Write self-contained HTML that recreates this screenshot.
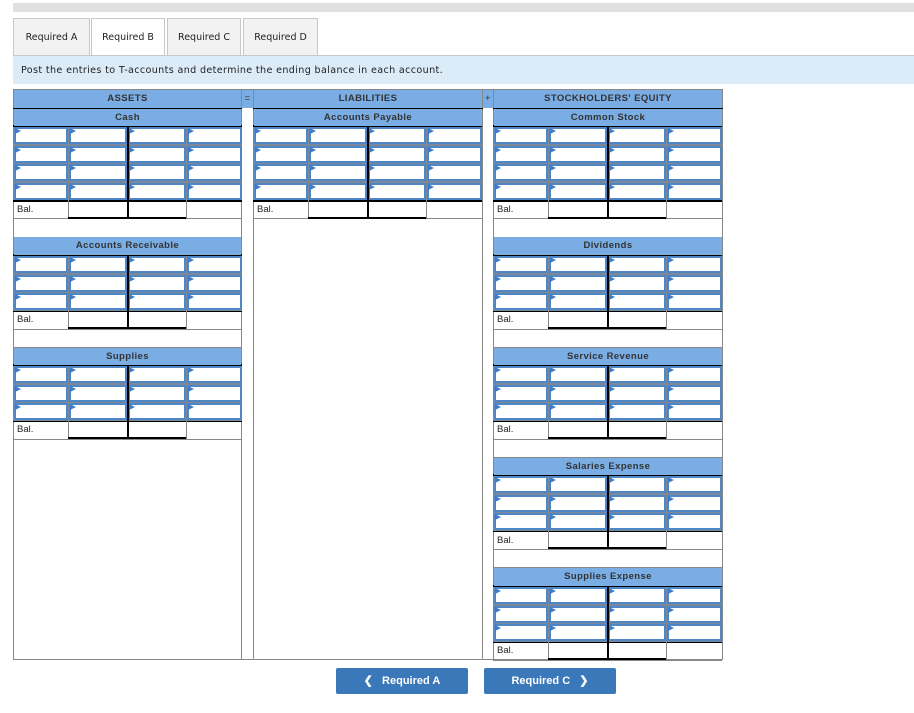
<!DOCTYPE html>
<html><head><meta charset="utf-8"><style>
body{margin:0;width:914px;height:713px;background:#fff;font-family:"Liberation Sans",Arial,sans-serif;position:relative;overflow:hidden}
.a{position:absolute;box-sizing:border-box}
.tab{position:absolute;top:18px;height:38px;border:1px solid #c8c8c8;background:#f2f2f2;font-family:"DejaVu Sans",Verdana,sans-serif;font-size:9.5px;color:#222;text-align:center;line-height:38px;box-sizing:border-box}
.hd{position:absolute;background:#7aade4;font-size:9.5px;font-weight:bold;color:#333;text-align:center;box-sizing:border-box;letter-spacing:0.4px}
.bal{position:absolute;font-size:9.5px;color:#222}
.btn{position:absolute;top:668px;height:26px;background:#3a78b9;color:#fff;font-weight:bold;font-size:11px;text-align:center;line-height:26px;border-radius:2px}
</style></head><body>
<div class="a" style="left:13px;top:3px;width:901px;height:9px;background:#e0e0e0"></div>
<div class="tab" style="left:13px;width:77px">Required A</div>
<div class="tab" style="left:91px;width:74px;background:#fff;border-bottom-color:#fff;height:38px">Required B</div>
<div class="tab" style="left:167px;width:74px">Required C</div>
<div class="tab" style="left:243px;width:75px">Required D</div>
<div class="a" style="left:13px;top:55px;width:901px;height:29px;background:#dcebf8;border-top:1px solid #c8c8c8;font-family:'DejaVu Sans',Verdana,sans-serif;font-size:9.6px;letter-spacing:0.35px;color:#222;padding:9px 0 0 8px">Post the entries to T-accounts and determine the ending balance in each account.</div>
<div id="g"></div>
<div class="hd" style="left:14px;top:90px;width:227px;height:18px;line-height:18px">ASSETS</div>
<div class="hd" style="left:254px;top:90px;width:228px;height:18px;line-height:18px">LIABILITIES</div>
<div class="hd" style="left:494px;top:90px;width:228px;height:18px;line-height:18px">STOCKHOLDERS' EQUITY</div>
<div class="hd" style="left:242px;top:90px;width:11px;height:18px;line-height:18px;font-weight:normal">=</div>
<div class="hd" style="left:483px;top:90px;width:10px;height:18px;line-height:18px;font-weight:normal">+</div>
<div class="hd" style="left:14px;top:109px;width:227px;height:17px;line-height:17px">Cash</div>
<div class="hd" style="left:254px;top:109px;width:228px;height:17px;line-height:17px">Accounts Payable</div>
<div class="hd" style="left:494px;top:109px;width:228px;height:17px;line-height:17px">Common Stock</div>
<div class="hd" style="left:14px;top:237px;width:227px;height:18px;line-height:18px">Accounts Receivable</div>
<div class="hd" style="left:494px;top:237px;width:228px;height:18px;line-height:18px">Dividends</div>
<div class="hd" style="left:14px;top:348px;width:227px;height:17px;line-height:17px">Supplies</div>
<div class="hd" style="left:494px;top:348px;width:228px;height:17px;line-height:17px">Service Revenue</div>
<div class="hd" style="left:494px;top:458px;width:228px;height:17px;line-height:17px">Salaries Expense</div>
<div class="hd" style="left:494px;top:568px;width:228px;height:18px;line-height:18px">Supplies Expense</div>
<div class="bal" style="left:17px;top:204px">Bal.</div>
<div class="bal" style="left:257px;top:204px">Bal.</div>
<div class="bal" style="left:497px;top:204px">Bal.</div>
<div class="bal" style="left:17px;top:314px">Bal.</div>
<div class="bal" style="left:497px;top:314px">Bal.</div>
<div class="bal" style="left:17px;top:424px">Bal.</div>
<div class="bal" style="left:497px;top:424px">Bal.</div>
<div class="bal" style="left:497px;top:535px">Bal.</div>
<div class="bal" style="left:497px;top:645px">Bal.</div>
<div class="btn" style="left:336px;width:132px">&#10094;&nbsp;&nbsp;&nbsp;Required A</div>
<div class="btn" style="left:484px;width:132px">Required C&nbsp;&nbsp;&nbsp;&#10095;</div>
<script>
var g=document.getElementById('g');
function d(x,y,w,h,s){var e=document.createElement('div');e.className='a';e.style.cssText='left:'+x+'px;top:'+y+'px;width:'+w+'px;height:'+h+'px;'+(s||'');g.appendChild(e);}
d(13,89,710,571,'border:1px solid #888');
[241,253,482,493].forEach(function(x){d(x,89,1,571,'background:#888')});
function sec(x0,top,n,blank){
  var cols=[x0,x0+55,x0+114,x0+173,x0+229];
  var y=top;
  for(var i=0;i<n;i++){
    for(var c=0;c<4;c++){
      d(cols[c],y,cols[c+1]-cols[c],18.5,'background:#7a8899');
      d(cols[c]+1,y+1,cols[c+1]-cols[c]-1,17,'background:#fff;border:2px solid #4f86c6');
      d(cols[c]+2,y+2,0,0,'border-left:6px solid #3d7cc9;border-top:3px solid transparent;border-bottom:3px solid transparent;');
    }
    y+=18.5;
  }
  d(cols[2],top-1,2,18.5*n+1,'background:#000');
  d(x0,top-1,cols[4]-x0,1.5,'background:#000');
  d(x0,y,cols[4]-x0,1.5,'background:#000');
  d(x0,y+18,cols[4]-x0,1,'background:#888');
  d(cols[1],y,1,18,'background:#888');
  d(cols[3],y,1,18,'background:#888');
  d(cols[2],y,1.5,18,'background:#000');
  d(cols[1],y+16.5,cols[3]-cols[1],2,'background:#000');
  if(blank) d(x0,y+36.5,cols[4]-x0,1,'background:#888');
}
sec(13,126,4,true);sec(253,126,4,false);sec(493,126,4,true);
sec(13,255,3,true);sec(493,255,3,true);
sec(13,365,3,false);sec(493,365,3,true);
sec(493,475,3,true);sec(493,586,3,false);
d(13,107.5,229,1.5,'background:#000');d(253,107.5,230,1.5,'background:#000');d(493,107.5,230,1.5,'background:#000');
</script>
</body></html>
